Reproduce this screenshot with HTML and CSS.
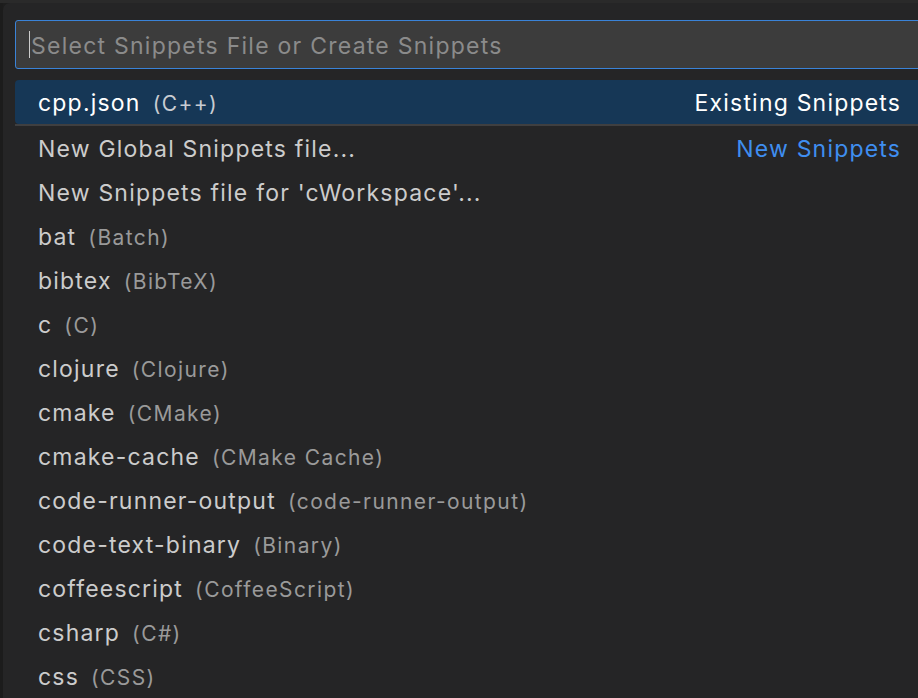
FILE: index.html
```html
<!DOCTYPE HTML>
<html>
<head>
    <meta charset='utf-8'>
    <link rel="stylesheet" href="styles.css">
</head>
<body>
    <div class="topStrip"></div>
    <div class="workbench">
        <!--編輯器左側殘影-->
        <div class="gutter"></div>

        <!--快速選單-->
        <div class="quickInput">
            <div class="inputBox">
                <span class="caret"></span>
                <span class="placeholder">Select Snippets File or Create Snippets</span>
            </div>

            <div class="pickList">
                <div class="pickRow selected">
                    <span class="label">cpp.json</span><span class="desc">(C++)</span>
                    <span class="group">Existing Snippets</span>
                </div>
                <div class="separator"></div>
                <div class="pickRow">
                    <span class="label">New Global Snippets file...</span>
                    <span class="group link">New Snippets</span>
                </div>
                <div class="pickRow"><span class="label">New Snippets file for 'cWorkspace'...</span></div>
                <div class="pickRow"><span class="label">bat</span><span class="desc">(Batch)</span></div>
                <div class="pickRow"><span class="label">bibtex</span><span class="desc">(BibTeX)</span></div>
                <div class="pickRow"><span class="label">c</span><span class="desc">(C)</span></div>
                <div class="pickRow"><span class="label">clojure</span><span class="desc">(Clojure)</span></div>
                <div class="pickRow"><span class="label">cmake</span><span class="desc">(CMake)</span></div>
                <div class="pickRow"><span class="label">cmake-cache</span><span class="desc">(CMake Cache)</span></div>
                <div class="pickRow"><span class="label">code-runner-output</span><span class="desc">(code-runner-output)</span></div>
                <div class="pickRow"><span class="label">code-text-binary</span><span class="desc">(Binary)</span></div>
                <div class="pickRow"><span class="label">coffeescript</span><span class="desc">(CoffeeScript)</span></div>
                <div class="pickRow"><span class="label">csharp</span><span class="desc">(C#)</span></div>
                <div class="pickRow"><span class="label">css</span><span class="desc">(CSS)</span></div>
            </div>
        </div>
    </div>
</body>
</html>
```

FILE: styles.css
```css
body {
    margin: 0;
    width: 918px;
    height: 698px;
    overflow: hidden;
    background-color: #1e1e1e;
    font-family: Inter, "Noto Sans", sans-serif;
}

.topStrip {
    height: 3px;
    background-color: #2a2a2a;
}

.workbench {
    display: flex;
    height: 695px;
}

.gutter {
    width: 3px;
    flex: 0 0 3px;
    background-color: #1c1c1c;
}

.quickInput {
    flex: 1 1 auto;
    background-color: #252526;
    border-top-left-radius: 7px;
    padding-top: 17px;
    padding-left: 12px;
}

.inputBox {
    box-sizing: border-box;
    height: 49px;
    padding-top: 3px;
    padding-left: 13px;
    margin-right: -4px;
    display: flex;
    align-items: center;
    background-color: #3c3c3c;
    border: 1px solid #3a83d8;
    border-radius: 3px;
}

.caret {
    width: 1px;
    height: 27px;
    margin-top: -3px;
    margin-right: 1px;
    background-color: #cccccc;
}

.placeholder {
    color: #8b8b8b;
    font-size: 23px;
    letter-spacing: 1.25px;
}

.pickList {
    margin-top: 11px;
}

.pickRow {
    box-sizing: border-box;
    height: 44px;
    padding-top: 2px;
    padding-left: 23px;
    padding-right: 18px;
    display: flex;
    align-items: center;
    border-radius: 4px 0 0 4px;
    color: #cccccc;
    font-size: 23px;
    letter-spacing: 1.2px;
}

.pickRow.selected {
    background-color: #163756;
    color: #ffffff;
}

.separator {
    height: 2px;
    background-color: #3f3f40;
}

.desc {
    margin-left: 12px;
    font-size: 21px;
    letter-spacing: 1.4px;
    color: #9a9a9a;
}

.selected .desc {
    color: #c8ccd2;
}

.group {
    margin-left: auto;
    margin-right: -1.2px;
}

.link {
    color: #3f8ef0;
}
```
